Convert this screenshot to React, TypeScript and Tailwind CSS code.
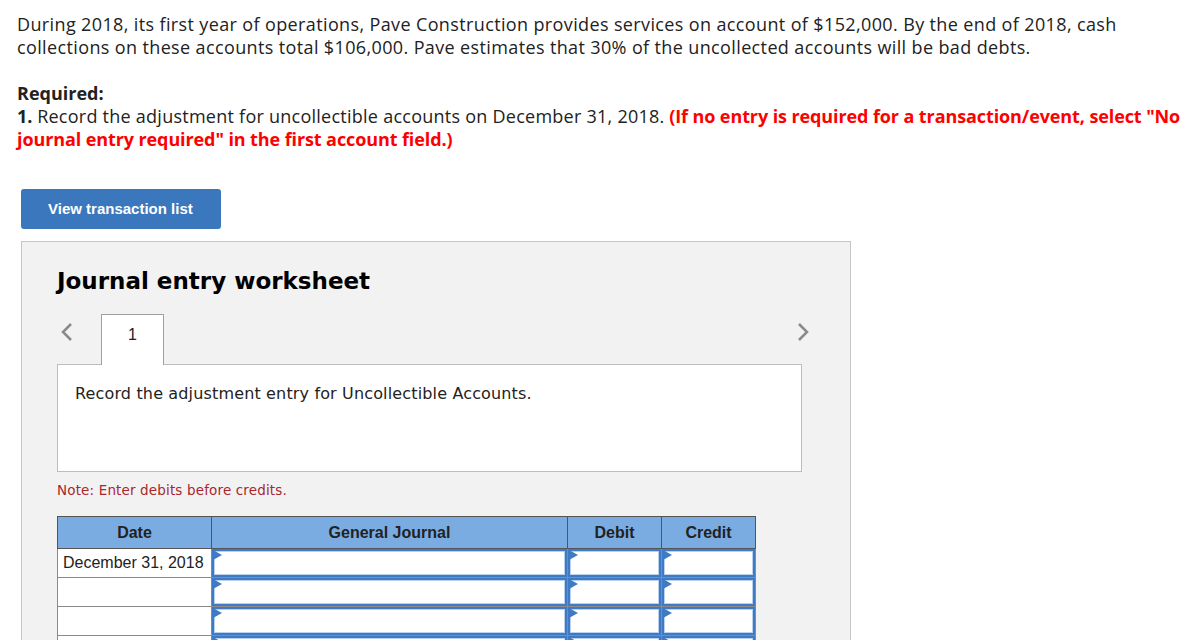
import React from "react";

const body = { fontFamily: "'Open Sans', Lato, sans-serif" };
const verdana = { fontFamily: "'DejaVu Sans', Verdana, sans-serif" };
const arial = { fontFamily: "'Liberation Sans', Arial, sans-serif" };

function Cell() {
    return (
        <div className="relative h-full w-full border-2 border-[#3f7bc4]">
            <div className="h-full w-full border border-[#b9d0ee] bg-white" />
            <span className="absolute -left-[1px] -top-[1px] h-0 w-0 border-y-[5px] border-l-[9px] border-y-transparent border-l-[#3f7bc4]" />
        </div>
    );
}

const rows = ["December 31, 2018", "", "", ""];

export default function App() {
    return (
        <div className="h-[640px] w-[1190px] overflow-hidden bg-white text-[#222]">
            <div className="whitespace-nowrap px-[17px] pt-[13px] text-[18px] leading-[23px]" style={body}>
                <p className="tracking-[0.37px]">
                    During 2018, its first year of operations, Pave Construction provides services on account of $152,000. By the end of 2018, cash
                    <br />
                    collections on these accounts total $106,000. Pave estimates that 30% of the uncollected accounts will be bad debts.
                </p>
                <p className="mt-[23px] font-bold">Required:</p>
                <p>
                    <b>1.</b> <span className="tracking-[0.25px]">Record the adjustment for uncollectible accounts on December 31, 2018.</span>{" "}
                    <span className="font-bold tracking-[-0.1px] text-[#ff0000]">
                        (If no entry is required for a transaction/event, select "No
                        <br />
                        journal entry required" in the first account field.)
                    </span>
                </p>
            </div>

            <div className="ml-[21px] mt-[38px]">
                <button
                    className="flex h-[40px] w-[200px] items-center rounded-[3px] bg-[#3a77bd] pl-[27px] text-[15px] font-bold text-white"
                    style={arial}
                >
                    View transaction list
                </button>

                <div className="mt-[12px] h-[420px] w-[830px] border border-[#c6c6c6] bg-[#f2f2f2] pl-[35px] pt-[22px]">
                    <h2 className="text-[23px] font-bold leading-[34px] text-black" style={verdana}>
                        Journal entry worksheet
                    </h2>

                    <div className="mt-[16px] flex h-[51px] items-start">
                        <span className="mt-[8px] w-[44px] pl-[3px]">
                            <svg width="14" height="20" viewBox="0 0 14 20">
                                <path d="M11 2 L3 10 L11 18" fill="none" stroke="#8a8a8a" strokeWidth="2.5" />
                            </svg>
                        </span>
                        <div
                            className="relative z-10 flex h-[51px] w-[63px] justify-center border border-b-0 border-[#a0a0a0] bg-white pt-[8px] text-[16px]"
                            style={arial}
                        >
                            1
                        </div>
                        <span className="ml-auto mr-[40px] mt-[8px]">
                            <svg width="14" height="20" viewBox="0 0 14 20">
                                <path d="M3 2 L11 10 L3 18" fill="none" stroke="#8a8a8a" strokeWidth="2.5" />
                            </svg>
                        </span>
                    </div>

                    <div
                        className="-mt-[1px] h-[108px] w-[745px] border border-[#bdbdbd] bg-white pl-[17px] pt-[17px] text-[16px] tracking-[0.15px] text-[#222]"
                        style={verdana}
                    >
                        Record the adjustment entry for Uncollectible Accounts.
                    </div>

                    <p className="mt-[8px] text-[13.5px] tracking-[0.15px] text-[#a8282d]" style={verdana}>
                        Note: Enter debits before credits.
                    </p>

                    <table className="mt-[16px] border-collapse text-[16px]" style={arial}>
                        <thead>
                            <tr className="h-[32px] bg-[#7aace2] font-bold text-[#222]">
                                <th className="w-[154px] border border-[#555]">Date</th>
                                <th className="w-[356px] border border-[#555]">General Journal</th>
                                <th className="w-[94px] border border-[#555]">Debit</th>
                                <th className="w-[94px] border border-[#555]">Credit</th>
                            </tr>
                        </thead>
                        <tbody>
                            {rows.map((d, i) => (
                                <tr key={i} className="h-[29px] bg-white">
                                    <td className="border border-[#8a8a8a] px-[5px] text-left font-normal">{d}</td>
                                    <td className="h-[29px] border border-[#8a8a8a] p-0">
                                        <Cell />
                                    </td>
                                    <td className="h-[29px] border border-[#8a8a8a] p-0">
                                        <Cell />
                                    </td>
                                    <td className="h-[29px] border border-[#8a8a8a] p-0">
                                        <Cell />
                                    </td>
                                </tr>
                            ))}
                        </tbody>
                    </table>
                </div>
            </div>
        </div>
    );
}
